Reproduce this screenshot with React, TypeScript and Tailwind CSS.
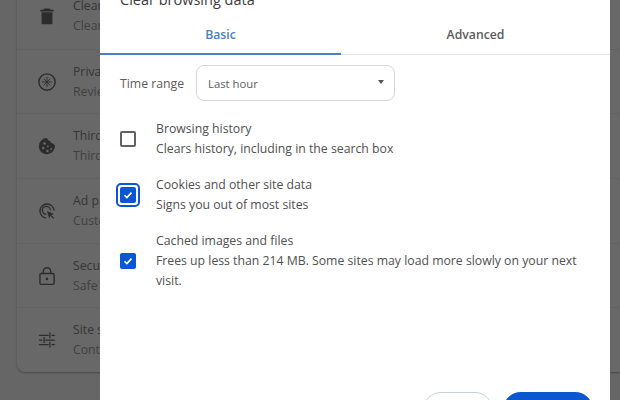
import React from "react";

const F = "font-['Open_Sans','Noto_Sans',sans-serif]";

const rows: { t: string; s: string; i: React.ReactNode }[] = [
  { t: "Clear browsing data", s: "Clear history, cookies", i: <path fill="currentColor" stroke="none" d="M8.500 3h7l.8 1.600H20v1.900H4V4.600h3.700zM5.500 7.500h13V22h-13z" /> },
  { t: "Privacy Guide", s: "Review key privacy", i: <><circle cx="12" cy="12" r="9.800" strokeWidth="1.700" /><path d="M12 6v12M6 12h12M8 8l8 8M16 8l-8 8" strokeWidth="1" /></> },
  { t: "Third-party cookies", s: "Third-party cookies", i: <><path fill="currentColor" stroke="none" d="M12 2.500c.6 2.600 2.300 3.400 3.800 3.400.2 2 1.700 3.100 3.600 3 .3 1 1.800 1.800 2.100 2.100A9.700 9.700 0 1 1 12 2.500z" /><g fill="#686868" stroke="none"><circle cx="9" cy="9" r="1.600" /><circle cx="7.500" cy="14.500" r="1.500" /><circle cx="13" cy="12.500" r="1.100" /><circle cx="12.500" cy="18" r="1.500" /><circle cx="17" cy="15.500" r="1.200" /></g></> },
  { t: "Ad privacy", s: "Customize the info", i: <><path d="M11 20.500a8.500 8.500 0 1 1 9.500-9" strokeWidth="1.600" /><path d="M11 16a4.800 4.800 0 1 1 5-5" strokeWidth="1.600" /><path d="M12 12l8.500 3.500-3.500 1.300 3.400 3.400-1 1-3.400-3.400-1.300 3.500z" fill="currentColor" stroke="none" /></> },
  { t: "Security", s: "Safe Browsing", i: <><rect x="3.500" y="9" width="17" height="13" rx="1.500" strokeWidth="1.700" /><path d="M7.500 9V6.500a4.500 4.500 0 0 1 9 0V9" strokeWidth="1.700" /><circle cx="12" cy="15.500" r="1.500" fill="currentColor" stroke="none" /></> },
  { t: "Site settings", s: "Controls what info", i: <path d="M2.500 6.500h11.500M17.500 6.500h4M15.500 3v7M2.500 12h4M10 12h11.500M8.500 8.500v7M2.500 17.500h11.500M17.500 17.500h4M15.500 14v7" strokeWidth="1.500" /> },
];

function Box({ on, focus }: { on?: boolean; focus?: boolean }) {
  return (
    <div className="w-[24px] flex justify-center shrink-0">
      <div className={`flex items-center justify-center ${focus ? "w-[24px] h-[24px] rounded-[5px] border-[2.5px] border-[#0b57d0]" : "w-[16px] h-[16px]"}`}>
        {on ? (
          <div className="w-[16px] h-[16px] rounded-[2px] bg-[#0b57d0] flex items-center justify-center shrink-0">
            <svg width="12" height="12" viewBox="0 0 12 12" fill="none" stroke="#fff" strokeWidth="1.600"><path d="M2.500 6.200l2.400 2.400 4.600-5" /></svg>
          </div>
        ) : (
          <div className="w-[16px] h-[16px] rounded-[2px] border-2 border-[#5f6368]" />
        )}
      </div>
    </div>
  );
}

function Opt({ t, s, on, focus, cls }: { t: string; s: React.ReactNode; on?: boolean; focus?: boolean; cls: string }) {
  return (
    <div className={`flex items-center gap-[16px] pl-[16px] ${cls}`}>
      <Box on={on} focus={focus} />
      <div className="text-[12.25px] leading-[20px] text-[#505050]">
        <div>{t}</div>
        <div className="w-[430px]">{s}</div>
      </div>
    </div>
  );
}

export default function App() {
  return (
    <div className={`relative w-[620px] h-[400px] overflow-hidden bg-[#666666] ${F}`}>
      <div className="ml-[17px] mt-[-16px] w-[700px] h-[388px] rounded-[8px] bg-[#686868] shadow-[0_1px_2px_rgba(0,0,0,0.3)] flex flex-col">
        {rows.map((r, i) => (
          <div key={r.t} className={`h-[64.7px] flex items-center ${i ? "border-t border-[#626262]" : ""}`}>
            <svg className="w-[20px] h-[20px] ml-[20px] text-[#2c2c2c]" viewBox="0 0 24 24" fill="none" stroke="currentColor" strokeWidth="2">{r.i}</svg>
            <div className="ml-[16px] text-[12.25px] leading-[20px] text-[#353535]">
              <div>{r.t}</div>
              <div className="text-[#404040]">{r.s}</div>
            </div>
          </div>
        ))}
      </div>

      <div className="absolute left-[100px] top-[-22px] w-[510px] h-[470px] bg-white flex flex-col">
        <div className="h-[42px] pl-[20px] pt-[12px] text-[14.5px] leading-[20px] text-[#3c3c3c]">Clear browsing data</div>
        <div className="flex h-[35px] border-b border-[#e3e3e3] text-[12.25px] font-semibold">
          <div className="w-[241px] h-[35px] flex items-center justify-center pb-[3px] text-[#4a80bf] border-b-[2px] border-[#4a80bf]">Basic</div>
          <div className="flex-1 flex items-center justify-center pb-[3px] text-[#5c5c5c]">Advanced</div>
        </div>
        <div className="flex items-center mt-[10px] pl-[20px]">
          <span className="w-[76px] text-[12.25px] text-[#5c5c5c] mt-[2px]">Time range</span>
          <div className="w-[199px] h-[36px] rounded-[8px] border border-[#d6d6d6] flex items-center justify-between pl-[11px] pr-[10px] text-[11.3px] text-[#5c5c5c]">
            <span className="mt-[3px]">Last hour</span>
            <span className="w-0 h-0 border-x-[3.5px] border-x-transparent border-t-[4px] border-t-[#555] mb-[2px]" />
          </div>
        </div>
        <Opt cls="mt-[18px]" t="Browsing history" s="Clears history, including in the search box" />
        <Opt cls="mt-[16px]" focus on t="Cookies and other site data" s="Signs you out of most sites" />
        <Opt cls="mt-[16px]" on t="Cached images and files" s="Frees up less than 214 MB. Some sites may load more slowly on your next visit." />
        <div className="flex justify-end gap-[10px] pr-[17px] mt-[101px]">
          <div className="w-[70px] h-[36px] rounded-full border border-[#c7d0da] bg-white text-[12px] text-[#0b57d0] flex items-center justify-center">Cancel</div>
          <div className="w-[90px] h-[36px] rounded-full bg-[#0b57d0] text-[12px] text-white flex items-center justify-center">Clear data</div>
        </div>
      </div>
    </div>
  );
}
